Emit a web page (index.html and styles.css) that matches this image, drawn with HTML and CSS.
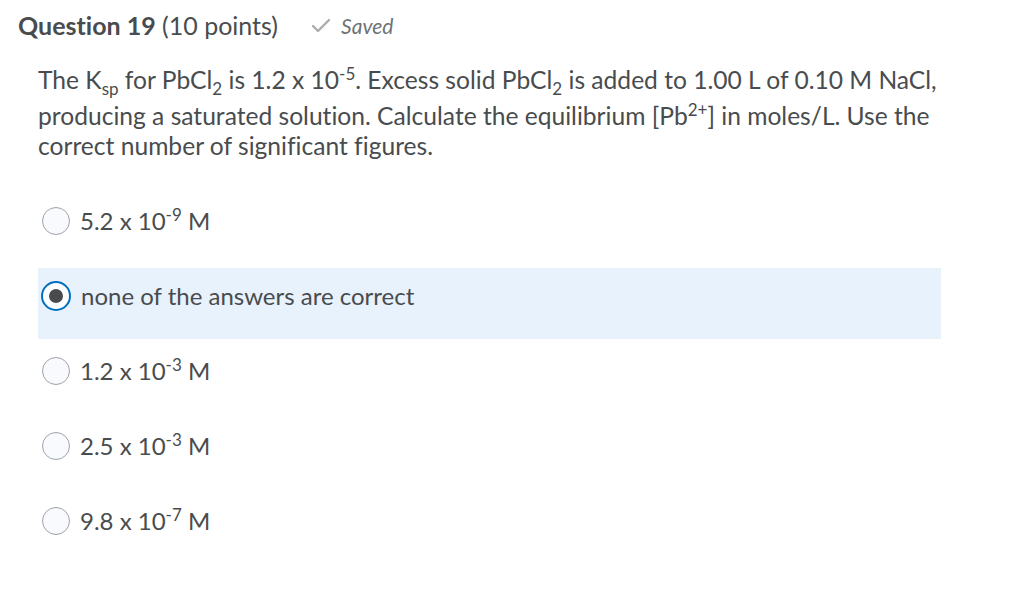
FILE: index.html
```html
<!DOCTYPE html>
<html>
<head>
<meta charset="utf-8">
<link rel="stylesheet" href="styles.css">
</head>
<body>
<div class="page">
  <div class="header">
    <h2 class="title"><strong>Question 19</strong> (10 points)</h2>
    <span class="saved">
      <svg class="check" width="20" height="15" viewBox="0 0 20 15"><path d="M2 8 L7 13 L18 2" fill="none" stroke="#a9adb0" stroke-width="2.4" stroke-linecap="round" stroke-linejoin="round"/></svg>
      Saved
    </span>
  </div>
  <div class="question">
    The K<sub>sp</sub> for PbCl<sub>2</sub> is 1.2 x 10<sup>-5</sup>. Excess solid PbCl<sub>2</sub> is added to 1.00 L of 0.10 M NaCl, producing a saturated solution. Calculate the equilibrium [Pb<sup>2+</sup>] in moles/L. Use the correct number of significant figures.
  </div>
  <div class="options">
    <div class="option"><span class="radio"></span><span class="label">5.2 x 10<sup>-9</sup> M</span></div>
    <div class="option selected"><span class="radio checked"></span><span class="label">none of the answers are correct</span></div>
    <div class="option"><span class="radio"></span><span class="label">1.2 x 10<sup>-3</sup> M</span></div>
    <div class="option"><span class="radio"></span><span class="label">2.5 x 10<sup>-3</sup> M</span></div>
    <div class="option"><span class="radio"></span><span class="label">9.8 x 10<sup>-7</sup> M</span></div>
  </div>
</div>
</body>
</html>
```
FILE: styles.css
```css
html, body {
  margin: 0;
  padding: 0;
  background: #ffffff;
}
body {
  font-family: Lato, "Open Sans", sans-serif;
  color: #494c4e;
  font-variant-ligatures: none;
}
.header {
  display: flex;
  align-items: center;
  padding: 8px 0 0 18px;
  height: 34px;
}
.title {
  margin: 0;
  font-size: 25px;
  font-weight: 400;
  color: #494c4e;
}
.title strong {
  font-weight: 700;
}
.saved {
  display: flex;
  align-items: center;
  gap: 10px;
  margin-left: 33px;
  font-style: italic;
  font-size: 21px;
  color: #6e7376;
}
.question {
  margin: 23px 0 0 38px;
  width: 920px;
  font-size: 24.6px;
  line-height: 30px;
}
.question sub, .question sup {
  font-size: 17px;
}
.question sub {
  line-height: 25px;
}
.question sup {
  line-height: 0;
}
.label sup {
  font-size: 17px;
  line-height: 0;
}
.options {
  margin: 32px 0 0 38px;
  width: 903px;
  display: flex;
  flex-direction: column;
  gap: 4px;
}
.option {
  height: 71px;
  display: flex;
  align-items: flex-start;
  padding: 13px 0 0 4px;
  box-sizing: border-box;
  font-size: 24px;
}
.option.selected {
  background: #e8f2fc;
}
.radio {
  width: 28px;
  height: 28px;
  box-sizing: border-box;
  border: 1px solid #9ea3a6;
  border-radius: 50%;
  background: #f9fafe;
  flex: none;
  display: flex;
  align-items: center;
  justify-content: center;
  margin-top: 1px;
}
.radio.checked {
  width: 30px;
  height: 30px;
  margin-top: 0;
  margin-left: -1px;
  border: 2px solid #006fbf;
  background: #ffffff;
}
.radio.checked::after {
  content: "";
  width: 14px;
  height: 14px;
  border-radius: 50%;
  background: #494c4e;
}
.label {
  margin-left: 10px;
  line-height: 30px;
}
```
